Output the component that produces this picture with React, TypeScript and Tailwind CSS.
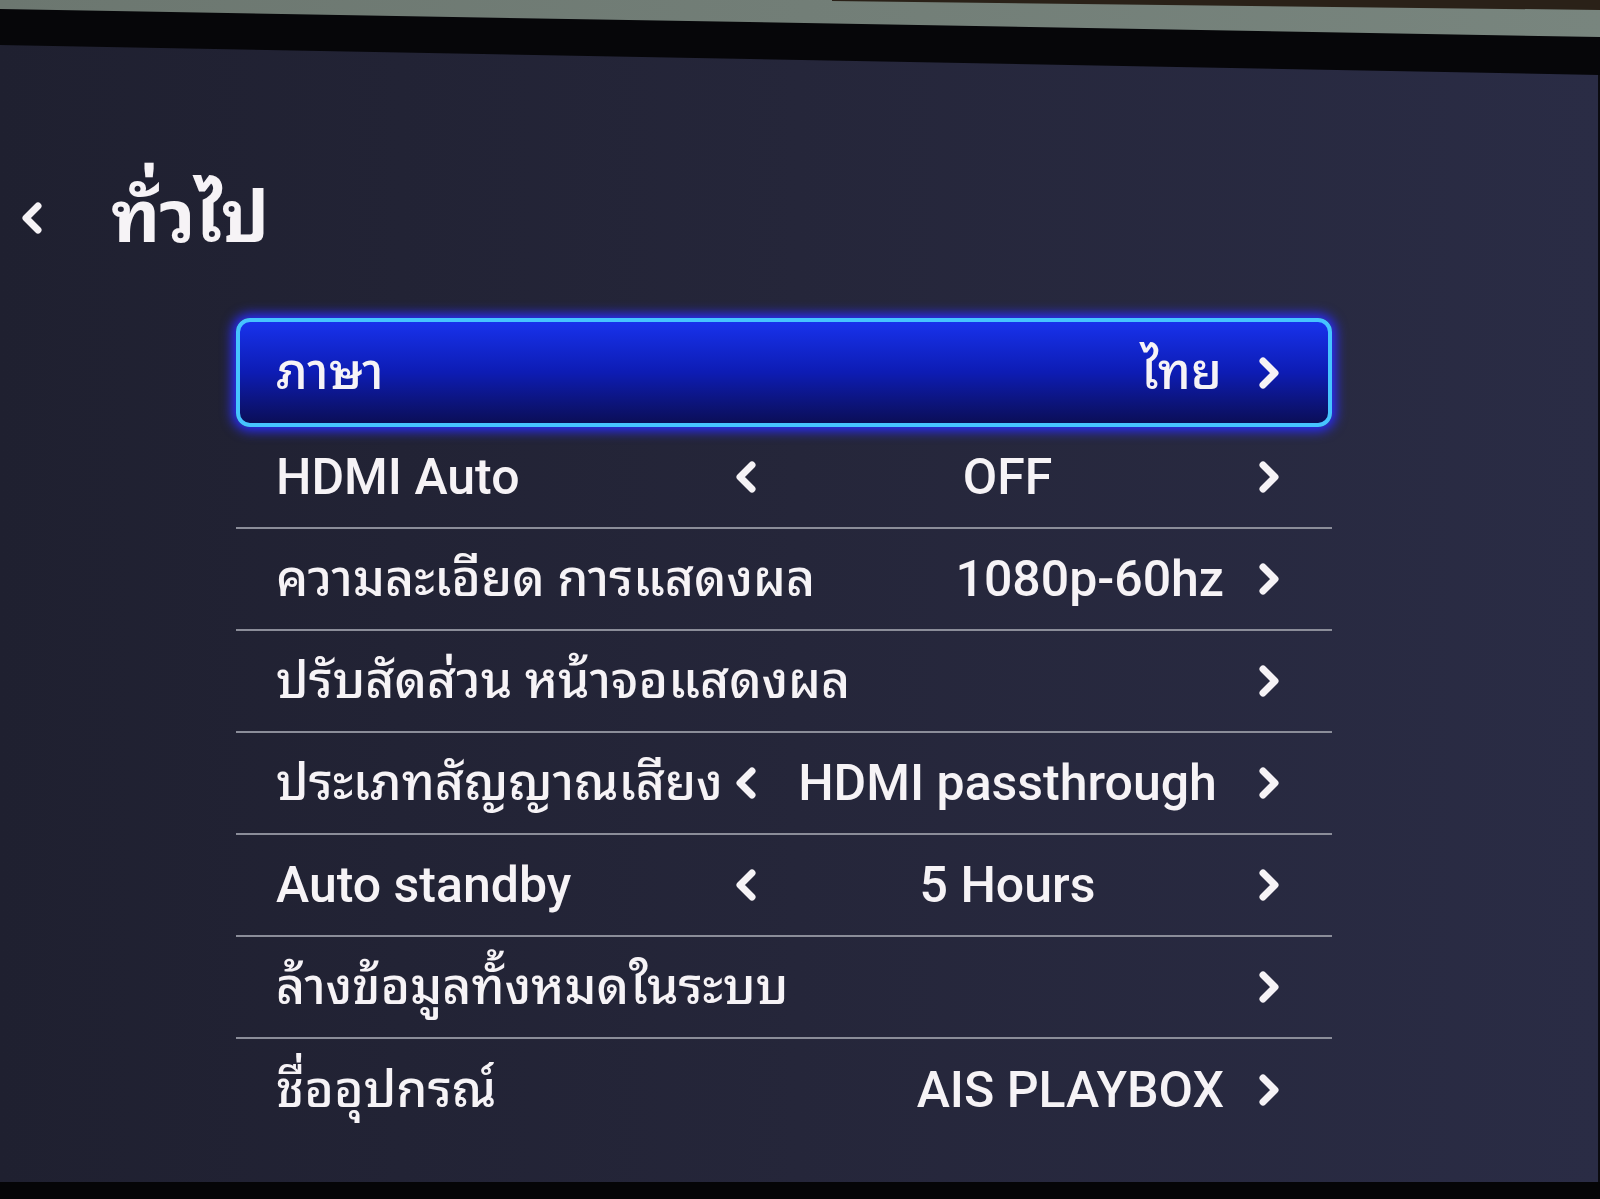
import React from "react";

type Row = {
  label: string;
  value?: string;
  kind: "nav" | "select";
};

const rows: Row[] = [
  { label: "HDMI Auto", value: "OFF", kind: "select" },
  { label: "ความละเอียด การแสดงผล", value: "1080p-60hz", kind: "nav" },
  { label: "ปรับสัดส่วน หน้าจอแสดงผล", kind: "nav" },
  { label: "ประเภทสัญญาณเสียง", value: "HDMI passthrough", kind: "select" },
  { label: "Auto standby", value: "5 Hours", kind: "select" },
  { label: "ล้างข้อมูลทั้งหมดในระบบ", kind: "nav" },
  { label: "ชื่ออุปกรณ์", value: "AIS PLAYBOX", kind: "nav" },
];

const font =
  "font-['Roboto','Noto_Sans_Thai_Looped','Loma','Garuda','Waree','Noto_Sans_Thai',sans-serif]";

// chunky rounded chevron used on every row
function Chevron({ dir = "right", className = "" }: { dir?: "left" | "right"; className?: string }) {
  return (
    <svg
      viewBox="0 0 22 34"
      className={className}
      fill="none"
      stroke="currentColor"
      strokeWidth={7}
      strokeLinecap="round"
      strokeLinejoin="round"
    >
      <polyline points={dir === "right" ? "5,5 17,17 5,29" : "17,5 5,17 17,29"} />
    </svg>
  );
}

function MenuRow({ row }: { row: Row }) {
  if (row.kind === "select") {
    return (
      <div className="flex h-[102px] items-center border-b-2 border-[#8b8d99] pl-[40px] pr-[52px] text-[50px] font-medium">
        <span className="w-[459px] shrink-0 whitespace-nowrap">{row.label}</span>
        <Chevron dir="left" className="h-[34px] w-[22px] shrink-0" />
        <span className="flex-1 text-center whitespace-nowrap">{row.value}</span>
        <Chevron className="h-[34px] w-[22px] shrink-0" />
      </div>
    );
  }
  return (
    <div className="flex h-[102px] items-center border-b-2 border-[#8b8d99] pl-[40px] pr-[52px] text-[50px] font-medium last:border-b-0">
      <span className="whitespace-nowrap">{row.label}</span>
      <span className="flex-1" />
      {row.value && <span className="mr-[34px] whitespace-nowrap">{row.value}</span>}
      <Chevron className="h-[34px] w-[22px] shrink-0" />
    </div>
  );
}

export default function App() {
  return (
    <div className={`relative flex h-[1199px] w-full flex-col overflow-hidden bg-black text-[#f6f3f6] ${font}`}>
      {/* screen */}
      <div className="flex-1 border-r-2 border-[#0b0b10] bg-gradient-to-r from-[#1f2030] via-[#25263a] to-[#2a2c45]">
        <div className="mt-[180px] flex h-[75px] items-center">
          <Chevron dir="left" className="ml-[21px] h-[36px] w-[22px]" />
          <h1 className="ml-[68px] text-[72px] font-bold leading-none">ทั่วไป</h1>
        </div>

        <div className="ml-[236px] mt-[63px] w-[1096px]">
          <div className="flex h-[109px] items-center rounded-[14px] border-4 border-[#46c4ff] bg-gradient-to-b from-[#1832ec] via-[#0d1cb4] to-[#0a0e58] pl-[36px] pr-[48px] text-[50px] font-medium shadow-[0_0_12px_4px_#2a2cff]">
            <span>ภาษา</span>
            <span className="flex-1" />
            <span className="mr-[36px]">ไทย</span>
            <Chevron className="h-[34px] w-[22px]" />
          </div>
          {rows.map((r) => (
            <MenuRow key={r.label} row={r} />
          ))}
        </div>
      </div>
      <div className="h-[17px] bg-[#050507]" />

      {/* bezel and wall along the top edge */}
      <div className="pointer-events-none absolute inset-x-0 top-0 h-[80px]">
        <div className="absolute inset-0 bg-[#060609] [clip-path:polygon(0_0,100%_0,100%_75px,0_45px)]" />
        <div className="absolute inset-0 bg-gradient-to-r from-[#6c7770] to-[#78857e] [clip-path:polygon(0_0,100%_0,100%_37px,0_9px)]" />
        <div className="absolute inset-0 bg-[#2a2118] [clip-path:polygon(52%_0,100%_0,100%_10px,52%_1px)]" />
      </div>
    </div>
  );
}
